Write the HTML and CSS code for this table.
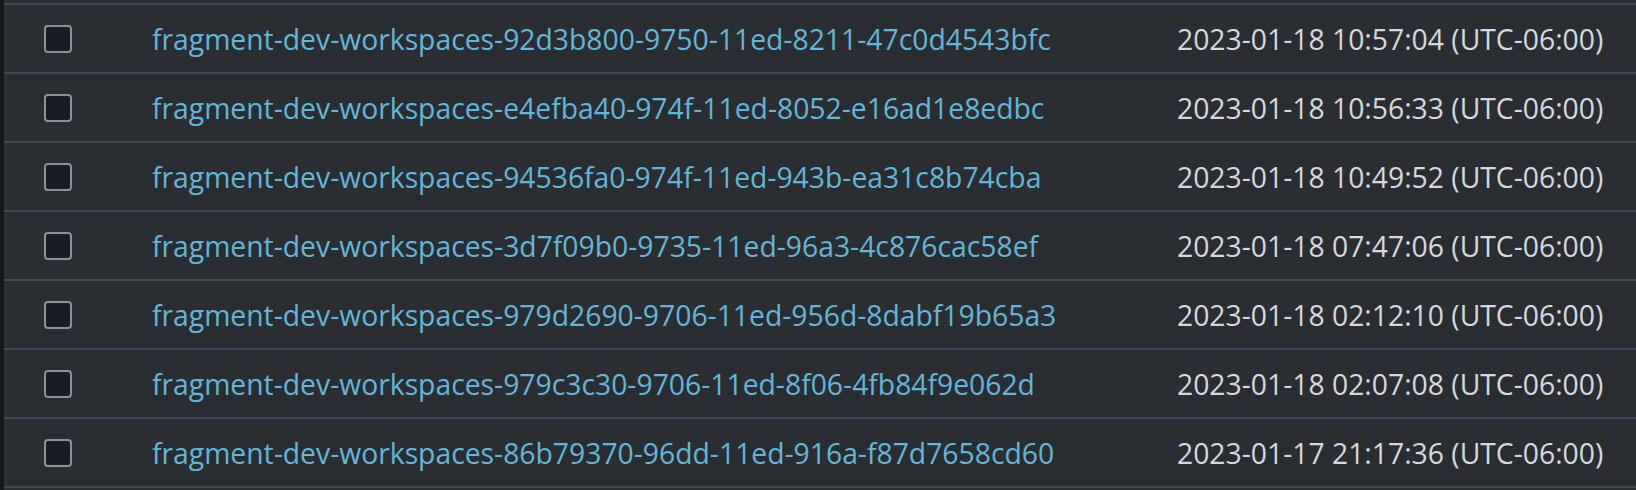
FILE: index.html
```html
<!DOCTYPE html>
<html>
<head>
<meta charset="utf-8">
<link rel="stylesheet" href="styles.css">
</head>
<body>
<div class="page">
  <div class="strip"></div>
  <div class="table">
    <div class="row row-partial"></div>
    <div class="row">
      <div class="cell cell-check"><span class="checkbox"></span></div>
      <div class="cell cell-name"><a class="link">fragment-dev-workspaces-92d3b800-9750-11ed-8211-47c0d4543bfc</a></div>
      <div class="cell cell-date">2023-01-18 10:57:04 (UTC-06:00)</div>
    </div>
    <div class="row">
      <div class="cell cell-check"><span class="checkbox"></span></div>
      <div class="cell cell-name"><a class="link">fragment-dev-workspaces-e4efba40-974f-11ed-8052-e16ad1e8edbc</a></div>
      <div class="cell cell-date">2023-01-18 10:56:33 (UTC-06:00)</div>
    </div>
    <div class="row">
      <div class="cell cell-check"><span class="checkbox"></span></div>
      <div class="cell cell-name"><a class="link">fragment-dev-workspaces-94536fa0-974f-11ed-943b-ea31c8b74cba</a></div>
      <div class="cell cell-date">2023-01-18 10:49:52 (UTC-06:00)</div>
    </div>
    <div class="row">
      <div class="cell cell-check"><span class="checkbox"></span></div>
      <div class="cell cell-name"><a class="link">fragment-dev-workspaces-3d7f09b0-9735-11ed-96a3-4c876cac58ef</a></div>
      <div class="cell cell-date">2023-01-18 07:47:06 (UTC-06:00)</div>
    </div>
    <div class="row">
      <div class="cell cell-check"><span class="checkbox"></span></div>
      <div class="cell cell-name"><a class="link">fragment-dev-workspaces-979d2690-9706-11ed-956d-8dabf19b65a3</a></div>
      <div class="cell cell-date">2023-01-18 02:12:10 (UTC-06:00)</div>
    </div>
    <div class="row">
      <div class="cell cell-check"><span class="checkbox"></span></div>
      <div class="cell cell-name"><a class="link">fragment-dev-workspaces-979c3c30-9706-11ed-8f06-4fb84f9e062d</a></div>
      <div class="cell cell-date">2023-01-18 02:07:08 (UTC-06:00)</div>
    </div>
    <div class="row">
      <div class="cell cell-check"><span class="checkbox"></span></div>
      <div class="cell cell-name"><a class="link">fragment-dev-workspaces-86b79370-96dd-11ed-916a-f87d7658cd60</a></div>
      <div class="cell cell-date">2023-01-17 21:17:36 (UTC-06:00)</div>
    </div>
    <div class="row row-partial"></div>
  </div>
</div>
</body>
</html>
```

FILE: styles.css
```css
html, body {
  margin: 0;
  padding: 0;
  background: #2a2e33;
  overflow: hidden;
}
.page {
  display: flex;
  height: 490px;
  font-family: "Open Sans", "Noto Sans", sans-serif;
  font-size: 28.3px;
}
.strip {
  width: 4px;
  flex: none;
  background: #15171b;
}
.table {
  flex: 1;
  display: flex;
  flex-direction: column;
}
.row {
  display: flex;
  align-items: center;
  height: 67px;
  flex: none;
  border-top: 2px solid #414750;
}
.row-partial {
  height: 3px;
  border-top: none;
}
.row-partial:last-child {
  border-top: 2px solid #414750;
  height: 10px;
}
.cell-check {
  width: 40px;
  padding-left: 40px;
  display: flex;
  align-items: center;
}
.checkbox {
  width: 24px;
  height: 24px;
  border: 2px solid #8c9198;
  border-radius: 4px;
  background: #1a1d23;
}
.cell-name {
  width: 1093px;
  padding-left: 68px;
  box-sizing: border-box;
  white-space: nowrap;
}
.link {
  color: #62b6d9;
}
.cell-date {
  color: #d5d8dc;
  white-space: nowrap;
}
```
